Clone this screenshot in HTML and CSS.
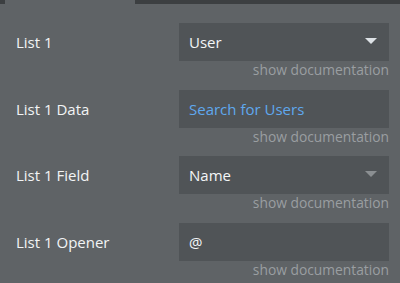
FILE: index.html
```html
<!DOCTYPE html>
<html>
<head>
<meta charset="utf-8">
<link rel="stylesheet" href="styles.css">
</head>
<body>
<div class="topbar">
  <div class="tb-left"></div>
  <div class="tb-tab"></div>
  <div class="tb-right"></div>
</div>
<div class="panel">
  <div class="row">
    <div class="label">List 1</div>
    <div class="field">
      <div class="box"><span class="val">User</span><span class="arrow"></span></div>
      <div class="doc">show documentation</div>
    </div>
  </div>
  <div class="row">
    <div class="label">List 1 Data</div>
    <div class="field">
      <div class="box"><span class="val link">Search for Users</span></div>
      <div class="doc">show documentation</div>
    </div>
  </div>
  <div class="row">
    <div class="label">List 1 Field</div>
    <div class="field">
      <div class="box"><span class="val">Name</span><span class="arrow dim"></span></div>
      <div class="doc">show documentation</div>
    </div>
  </div>
  <div class="row">
    <div class="label">List 1 Opener</div>
    <div class="field">
      <div class="box"><span class="val">@</span></div>
      <div class="doc">show documentation</div>
    </div>
  </div>
</div>
</body>
</html>
```
FILE: styles.css
```css
html, body {
  margin: 0;
  padding: 0;
  background: #5f6366;
  width: 400px;
  height: 283px;
  overflow: hidden;
  font-family: "Open Sans", "Noto Sans", sans-serif;
}
.topbar {
  display: flex;
  height: 4px;
}
.tb-left { width: 5px; background: #3c3f41; }
.tb-tab { width: 130px; background: #5f6366; }
.tb-right { flex: 1; background: #3c3f41; }
.panel {
  display: flex;
  flex-direction: column;
  padding: 19px 11px 0 16px;
  gap: 10px;
}
.row {
  display: flex;
  align-items: flex-start;
}
.label {
  width: 163px;
  height: 38px;
  line-height: 38px;
  font-size: 15px;
  color: #f2f4f5;
}
.field {
  flex: 1;
  display: flex;
  flex-direction: column;
}
.box {
  height: 38px;
  background: #505457;
  display: flex;
  align-items: center;
  padding: 0 12px 0 10px;
  justify-content: space-between;
}
.val {
  font-size: 15px;
  color: #f4f6f7;
}
.val.link { color: #5fa8ee; }
.arrow {
  width: 0;
  height: 0;
  border-left: 6px solid transparent;
  border-right: 6px solid transparent;
  border-top: 6px solid #dde2e6;
  margin-top: -2px;
}
.arrow.dim { border-top-color: #8b8f92; }
.doc {
  text-align: right;
  font-size: 13.8px;
  color: #9a9ea1;
  line-height: 18.5px;
  margin-top: 0;
}
```
